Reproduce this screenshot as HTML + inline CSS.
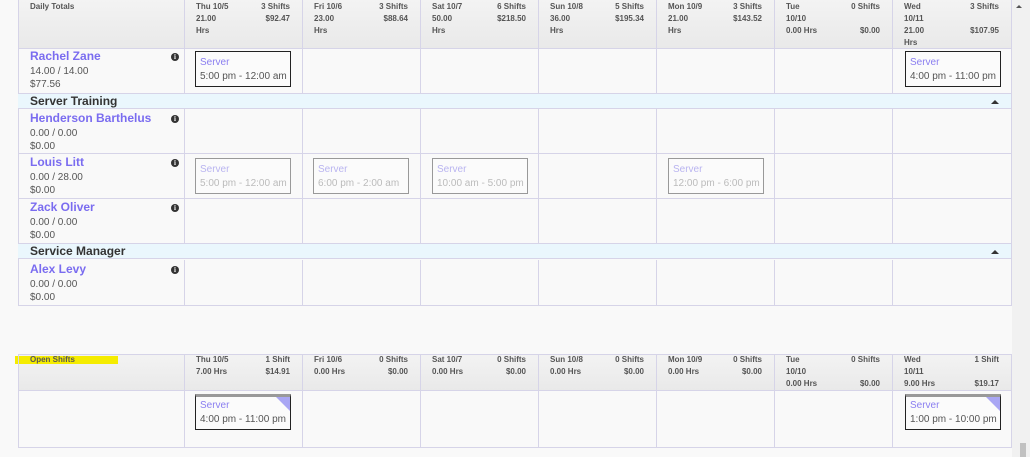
<!DOCTYPE html>
<html><head><meta charset="utf-8"><style>
*{margin:0;padding:0;box-sizing:border-box}
body{width:1030px;height:457px;background:#f9f9f9;font-family:"Liberation Sans",Arial,sans-serif;position:relative;overflow:hidden}
.a{position:absolute}
.hd{background:linear-gradient(#f3f3f3,#e9e9e9)}
.vl{position:absolute;width:1px;background:#d6d4e8}
.hl{position:absolute;height:1px;background:#d6d4e8}
.ht{position:absolute;font-size:8px;font-weight:bold;color:#555;line-height:12px}
.r{text-align:right}
.nm{position:absolute;left:30px;font-size:12px;font-weight:bold;color:#7a6cf0}
.sub{position:absolute;left:30px;font-size:10px;color:#555;line-height:13px}
.ic{position:absolute;left:171px;width:8px;height:8px;border-radius:50%;background:#333;color:#fff;font-size:7px;font-weight:bold;text-align:center;line-height:8px;font-family:"Liberation Serif",serif}
.sec{position:absolute;left:18px;width:993px;height:16px;background:#eaf7fd;font-size:12px;font-weight:bold;color:#333;padding-left:12px;line-height:15px}
.tri{position:absolute;right:12px;top:6px;width:0;height:0;border-left:4px solid transparent;border-right:4px solid transparent;border-bottom:4px solid #333}
.sh{position:absolute;width:96px;height:36px;border:1px solid #222;background:#fbfbfb;padding:4px 0 0 4px;font-size:10px;line-height:14px}
.sh .s{color:#8a7ef0}.sh .t{color:#555}
.sh.f{border-color:#999}.sh.f .s{color:#b9b4f0}.sh.f .t{color:#bbb}
.sh.o{border-top:3px solid #999;padding-top:2px}
.sh.o:after{content:"";position:absolute;right:0;top:0;border-top:14px solid #a9a6f4;border-left:14px solid transparent}
</style></head><body>
<div class="a" style="left:1012px;top:0;width:18px;height:457px;background:#f1f1f1"></div>
<div class="a" style="left:1016px;top:5px;border-left:3px solid transparent;border-right:3px solid transparent;border-bottom:3px solid #555"></div>
<div class="a" style="left:1020px;top:443px;width:6px;height:14px;background:#c1c1c1"></div>

<!-- top header -->
<div class="a hd" style="left:18px;top:0;width:994px;height:48px"></div>
<div class="ht" style="left:30px;top:1px">Daily Totals</div>

<div class="ht" style="left:196px;top:1px">Thu 10/5<br>21.00<br>Hrs</div><div class="ht r" style="left:230px;top:1px;width:60px">3 Shifts<br>$92.47</div>
<div class="ht" style="left:314px;top:1px">Fri 10/6<br>23.00<br>Hrs</div><div class="ht r" style="left:348px;top:1px;width:60px">3 Shifts<br>$88.64</div>
<div class="ht" style="left:432px;top:1px">Sat 10/7<br>50.00<br>Hrs</div><div class="ht r" style="left:466px;top:1px;width:60px">6 Shifts<br>$218.50</div>
<div class="ht" style="left:550px;top:1px">Sun 10/8<br>36.00<br>Hrs</div><div class="ht r" style="left:584px;top:1px;width:60px">5 Shifts<br>$195.34</div>
<div class="ht" style="left:668px;top:1px">Mon 10/9<br>21.00<br>Hrs</div><div class="ht r" style="left:702px;top:1px;width:60px">3 Shifts<br>$143.52</div>
<div class="ht" style="left:786px;top:1px">Tue<br>10/10<br>0.00 Hrs</div><div class="ht r" style="left:820px;top:1px;width:60px">0 Shifts<br><br>$0.00</div>
<div class="ht" style="left:904px;top:1px">Wed<br>10/11<br>21.00<br>Hrs</div><div class="ht r" style="left:939px;top:1px;width:60px">3 Shifts<br><br>$107.95</div>

<!-- grid lines top table -->
<div class="hl" style="left:18px;top:48px;width:994px"></div>
<div class="hl" style="left:18px;top:305px;width:994px"></div>
<div class="vl" style="left:18px;top:0;height:306px"></div>
<div class="vl" style="left:1011px;top:0;height:306px"></div>
<div class="vl" style="left:184px;top:0;height:93px"></div><div class="vl" style="left:302px;top:0;height:93px"></div><div class="vl" style="left:420px;top:0;height:93px"></div><div class="vl" style="left:538px;top:0;height:93px"></div><div class="vl" style="left:656px;top:0;height:93px"></div><div class="vl" style="left:774px;top:0;height:93px"></div><div class="vl" style="left:892px;top:0;height:93px"></div>
<div class="vl" style="left:184px;top:109px;height:134px"></div><div class="vl" style="left:302px;top:109px;height:134px"></div><div class="vl" style="left:420px;top:109px;height:134px"></div><div class="vl" style="left:538px;top:109px;height:134px"></div><div class="vl" style="left:656px;top:109px;height:134px"></div><div class="vl" style="left:774px;top:109px;height:134px"></div><div class="vl" style="left:892px;top:109px;height:134px"></div>
<div class="vl" style="left:184px;top:260px;height:45px"></div><div class="vl" style="left:302px;top:260px;height:45px"></div><div class="vl" style="left:420px;top:260px;height:45px"></div><div class="vl" style="left:538px;top:260px;height:45px"></div><div class="vl" style="left:656px;top:260px;height:45px"></div><div class="vl" style="left:774px;top:260px;height:45px"></div><div class="vl" style="left:892px;top:260px;height:45px"></div>
<div class="hl" style="left:18px;top:153px;width:994px"></div>
<div class="hl" style="left:18px;top:198px;width:994px"></div>

<!-- Rachel -->
<div class="nm" style="top:49px">Rachel Zane</div><div class="ic" style="top:53px">i</div>
<div class="sub" style="top:65px">14.00 / 14.00<br>$77.56</div>
<div class="sh" style="left:195px;top:51px"><div class="s">Server</div><div class="t">5:00 pm - 12:00 am</div></div>
<div class="sh" style="left:905px;top:51px"><div class="s">Server</div><div class="t">4:00 pm - 11:00 pm</div></div>

<div class="sec" style="top:93px;border-top:1px solid #d6d4e8;border-bottom:1px solid #d6d4e8">Server Training<div class="tri"></div></div>

<div class="nm" style="top:111px">Henderson Barthelus</div><div class="ic" style="top:115px">i</div>
<div class="sub" style="top:127px">0.00 / 0.00<br>$0.00</div>

<div class="nm" style="top:155px">Louis Litt</div><div class="ic" style="top:159px">i</div>
<div class="sub" style="top:171px">0.00 / 28.00<br>$0.00</div>
<div class="sh f" style="left:195px;top:158px"><div class="s">Server</div><div class="t">5:00 pm - 12:00 am</div></div>
<div class="sh f" style="left:313px;top:158px"><div class="s">Server</div><div class="t">6:00 pm - 2:00 am</div></div>
<div class="sh f" style="left:432px;top:158px"><div class="s">Server</div><div class="t">10:00 am - 5:00 pm</div></div>
<div class="sh f" style="left:668px;top:158px"><div class="s">Server</div><div class="t">12:00 pm - 6:00 pm</div></div>

<div class="nm" style="top:200px">Zack Oliver</div><div class="ic" style="top:204px">i</div>
<div class="sub" style="top:216px">0.00 / 0.00<br>$0.00</div>

<div class="sec" style="top:243px;border-top:1px solid #d6d4e8;border-bottom:1px solid #d6d4e8">Service Manager<div class="tri"></div></div>

<div class="nm" style="top:262px">Alex Levy</div><div class="ic" style="top:266px">i</div>
<div class="sub" style="top:278px">0.00 / 0.00<br>$0.00</div>

<!-- open shifts -->
<div class="a hd" style="left:18px;top:354px;width:994px;height:36px"></div>
<div class="a" style="left:15px;top:356px;width:103px;height:8px;background:#f5ec00"></div>
<div class="ht" style="left:30px;top:354px">Open Shifts</div>
<div class="ht" style="left:196px;top:354px">Thu 10/5<br>7.00 Hrs</div><div class="ht r" style="left:230px;top:354px;width:60px">1 Shift<br>$14.91</div>
<div class="ht" style="left:314px;top:354px">Fri 10/6<br>0.00 Hrs</div><div class="ht r" style="left:348px;top:354px;width:60px">0 Shifts<br>$0.00</div>
<div class="ht" style="left:432px;top:354px">Sat 10/7<br>0.00 Hrs</div><div class="ht r" style="left:466px;top:354px;width:60px">0 Shifts<br>$0.00</div>
<div class="ht" style="left:550px;top:354px">Sun 10/8<br>0.00 Hrs</div><div class="ht r" style="left:584px;top:354px;width:60px">0 Shifts<br>$0.00</div>
<div class="ht" style="left:668px;top:354px">Mon 10/9<br>0.00 Hrs</div><div class="ht r" style="left:702px;top:354px;width:60px">0 Shifts<br>$0.00</div>
<div class="ht" style="left:786px;top:354px">Tue<br>10/10<br>0.00 Hrs</div><div class="ht r" style="left:820px;top:354px;width:60px">0 Shifts<br><br>$0.00</div>
<div class="ht" style="left:904px;top:354px">Wed<br>10/11<br>9.00 Hrs</div><div class="ht r" style="left:939px;top:354px;width:60px">1 Shift<br><br>$19.17</div>
<div class="hl" style="left:18px;top:354px;width:994px"></div>
<div class="hl" style="left:18px;top:390px;width:994px"></div>
<div class="hl" style="left:18px;top:447px;width:994px"></div>
<div class="vl" style="left:18px;top:354px;height:94px"></div><div class="vl" style="left:1011px;top:354px;height:94px"></div>
<div class="vl" style="left:184px;top:354px;height:94px"></div><div class="vl" style="left:302px;top:354px;height:94px"></div><div class="vl" style="left:420px;top:354px;height:94px"></div><div class="vl" style="left:538px;top:354px;height:94px"></div><div class="vl" style="left:656px;top:354px;height:94px"></div><div class="vl" style="left:774px;top:354px;height:94px"></div><div class="vl" style="left:892px;top:354px;height:94px"></div>
<div class="sh o" style="left:195px;top:394px"><div class="s">Server</div><div class="t">4:00 pm - 11:00 pm</div></div>
<div class="sh o" style="left:905px;top:394px"><div class="s">Server</div><div class="t">1:00 pm - 10:00 pm</div></div>
</body></html>
